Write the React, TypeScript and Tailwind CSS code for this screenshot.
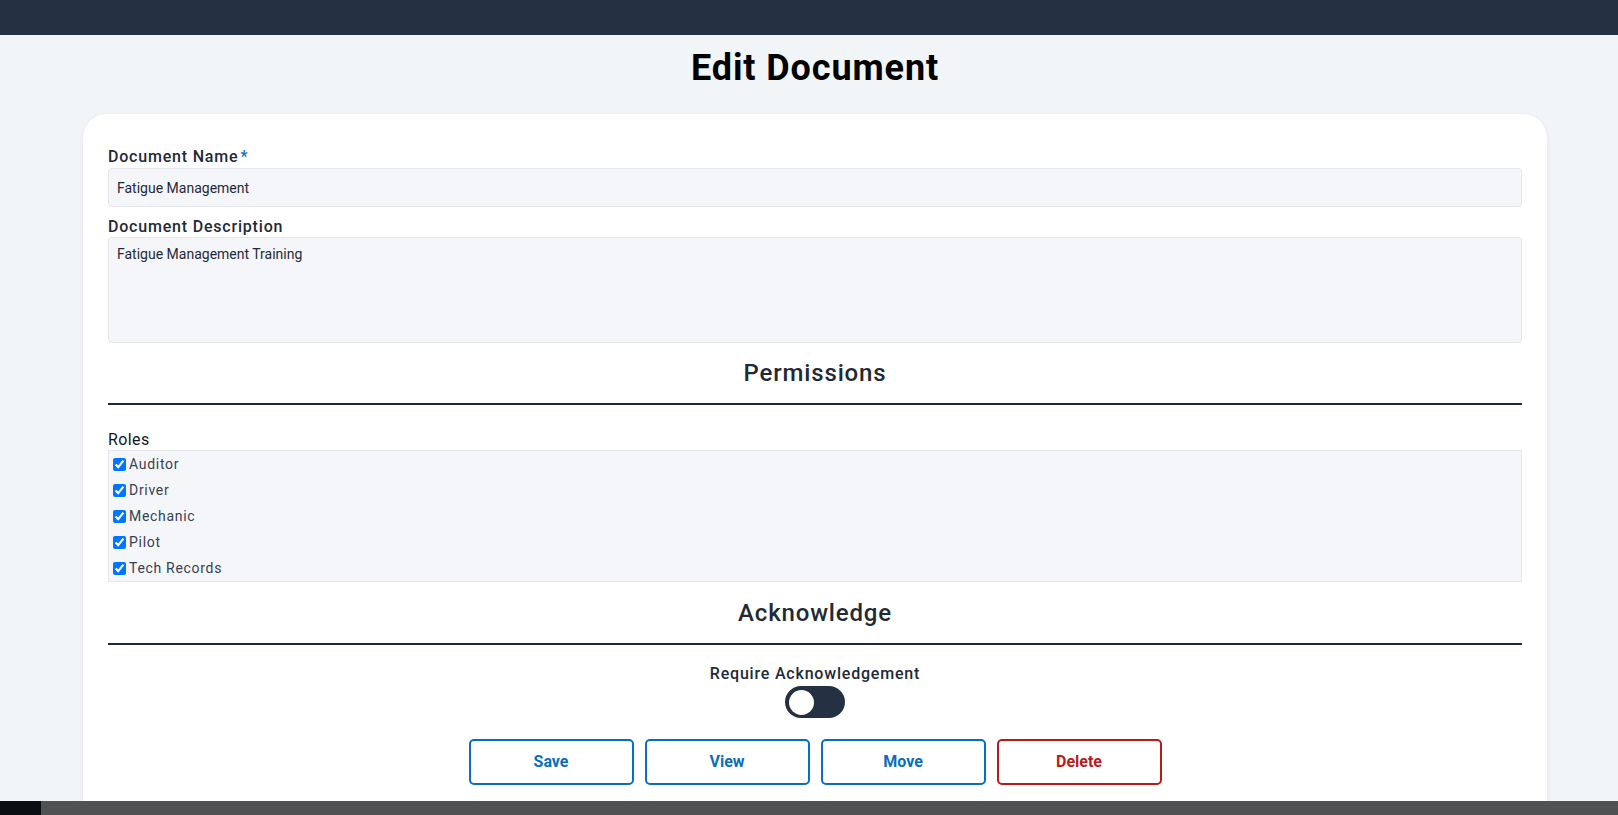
import { useState } from "react";

const roles = ["Auditor", "Driver", "Mechanic", "Pilot", "Tech Records"];

const actions: { label: string; danger?: boolean }[] = [
  { label: "Save" },
  { label: "View" },
  { label: "Move" },
  { label: "Delete", danger: true },
];

function SectionHeading({ title }: { title: string }) {
  return (
    <h2 className="border-b-2 border-[#1f2a37] pt-px pb-[14px] text-center text-2xl leading-8 font-medium tracking-[0.035em] text-[#1f2a37]">
      {title}
    </h2>
  );
}

export default function App() {
  const [name, setName] = useState("Fatigue Management");
  const [description, setDescription] = useState("Fatigue Management Training");
  const [checked, setChecked] = useState<string[]>(roles);
  const [acknowledge, setAcknowledge] = useState(false);

  const toggleRole = (role: string) =>
    setChecked((prev) => (prev.includes(role) ? prev.filter((r) => r !== role) : [...prev, role]));

  return (
    <div className="flex h-screen flex-col overflow-hidden bg-[#f2f5f8] font-['Roboto',sans-serif]">
      <header className="h-[35px] shrink-0 bg-[#233142]" />

      <main className="flex-1 overflow-hidden pl-[83px] pr-[71px]">
        <h1 className="pt-[13px] text-center text-4xl leading-10 font-bold tracking-wide text-black">
          Edit Document
        </h1>

        <div className="mt-[26px] rounded-3xl bg-white px-[25px] pt-[32px] pb-10 shadow-[0_1px_4px_rgba(0,0,0,0.08)]">
          <label className="block text-base leading-[22px] font-medium tracking-wider text-[#1f2937]">
            Document Name<span className="ml-0.5 text-[#0a6ebd]">*</span>
          </label>
          <input
            value={name}
            onChange={(e) => setName(e.target.value)}
            className="block h-[39px] w-full rounded-[4px] border border-[#e3e6ea] bg-[#f5f6fa] px-2 text-sm text-[#1f2937] outline-none"
          />

          <label className="mt-[9px] block text-base leading-[21px] font-medium tracking-wider text-[#1f2937]">
            Document Description
          </label>
          <textarea
            value={description}
            onChange={(e) => setDescription(e.target.value)}
            className="block h-[106px] w-full resize-none rounded-[4px] border border-[#e3e6ea] bg-[#f5f6fa] px-2 py-1.5 text-sm leading-5 text-[#1f2937] outline-none"
          />

          <div className="mt-[13px]">
            <SectionHeading title="Permissions" />
          </div>

          <p className="mt-[25px] text-base leading-5 tracking-wide text-[#111827]">Roles</p>
          <div className="border border-[#e3e6ea] bg-[#f5f6fa]">
            {roles.map((role) => (
              <label key={role} className="flex h-[26px] items-center text-sm tracking-wider text-[#374151]">
                <input
                  type="checkbox"
                  checked={checked.includes(role)}
                  onChange={() => toggleRole(role)}
                  className="mt-[3px] mr-[3px] mb-[3px] ml-1 h-[13px] w-[13px]"
                />
                {role}
              </label>
            ))}
          </div>

          <div className="mt-[14px]">
            <SectionHeading title="Acknowledge" />
          </div>

          <div className="mt-[17px] flex flex-col items-center">
            <span className="text-base leading-6 font-medium tracking-wider text-[#1f2937]">
              Require Acknowledgement
            </span>
            <button
              type="button"
              onClick={() => setAcknowledge((v) => !v)}
              className={`flex h-[32px] w-[60px] items-center rounded-full bg-[#233142] px-[4px] ${
                acknowledge ? "justify-end" : "justify-start"
              }`}
            >
              <span className="h-[25px] w-[25px] rounded-full bg-white" />
            </button>
          </div>

          <div className="mt-[21px] flex justify-center gap-[11px]">
            {actions.map((action) => (
              <button
                key={action.label}
                type="button"
                className={`h-[46px] w-[165px] rounded-[5px] border-2 bg-white text-base font-bold ${
                  action.danger ? "border-[#b71c1c] text-[#b71c1c]" : "border-[#0a6ebd] text-[#0a6ebd]"
                }`}
              >
                {action.label}
              </button>
            ))}
          </div>
        </div>
      </main>

      <footer className="flex h-[14px] shrink-0">
        <div className="w-[41px] bg-[#0b0f14]" />
        <div className="flex-1 bg-[#505153]" />
      </footer>
    </div>
  );
}
